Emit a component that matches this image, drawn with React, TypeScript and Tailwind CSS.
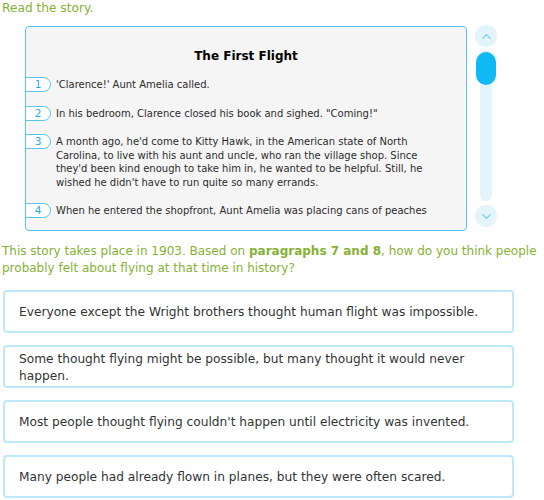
import { ChevronUp, ChevronDown } from "lucide-react";

const paragraphs = [
  "'Clarence!' Aunt Amelia called.",
  'In his bedroom, Clarence closed his book and sighed. "Coming!"',
  "A month ago, he'd come to Kitty Hawk, in the American state of North Carolina, to live with his aunt and uncle, who ran the village shop. Since they'd been kind enough to take him in, he wanted to be helpful. Still, he wished he didn't have to run quite so many errands.",
  "When he entered the shopfront, Aunt Amelia was placing cans of peaches",
];

const answers = [
  "Everyone except the Wright brothers thought human flight was impossible.",
  "Some thought flying might be possible, but many thought it would never happen.",
  "Most people thought flying couldn't happen until electricity was invented.",
  "Many people had already flown in planes, but they were often scared.",
];

function Scroller() {
  return (
    <div className="flex w-[22px] flex-col items-center">
      <div className="mt-[-1px] flex h-[22px] w-[22px] items-center justify-center rounded-full bg-[#e4f4fb]">
        <ChevronUp size={15} strokeWidth={1.75} className="text-[#6fc8ef]" />
      </div>
      <div className="relative mt-[3px] h-[151px] w-[12px] rounded-full bg-[#e4f4fb]">
        <div className="absolute left-[-4px] top-[2px] h-[33px] w-[20px] rounded-full bg-[#0fb9f3]" />
      </div>
      <div className="mt-[4px] flex h-[22px] w-[22px] items-center justify-center rounded-full bg-[#e4f4fb]">
        <ChevronDown size={15} strokeWidth={1.75} className="text-[#6fc8ef]" />
      </div>
    </div>
  );
}

export default function App() {
  return (
    <main className="h-[500px] w-[544px] overflow-hidden bg-white font-['DejaVu_Sans',Verdana,sans-serif]">
      <p className="pl-[2px] pt-[1px] text-[12.2px] leading-[15px] text-[#85b234]">Read the story.</p>

      <div className="mt-[10px] flex items-start">
        <div className="ml-[25px] h-[205px] w-[442px] overflow-hidden rounded-[4px] border border-[#52c5f0] bg-[#f5f5f5]">
          <h2 className="pt-[22px] text-center text-[12px] font-bold leading-[15px] text-black">The First Flight</h2>
          <div className="mt-[14px] flex flex-col gap-[14.5px] pr-[30px]">
            {paragraphs.map((p, i) => (
              <div key={i} className="flex items-start">
                <span className="-ml-px mt-[-1px] flex h-[15px] w-[26px] shrink-0 items-center justify-center rounded-r-full border border-[#52c5f0] bg-white text-[10.5px] leading-none text-[#2aa9e3]">
                  {i + 1}
                </span>
                <p className="ml-[5px] text-[10px] leading-[13.5px] text-[#2b2b2b]">{p}</p>
              </div>
            ))}
          </div>
        </div>
        <div className="ml-[8px]">
          <Scroller />
        </div>
      </div>

      <p className="mt-[12px] pl-[2px] text-[12px] leading-[17px] text-[#85b234]">
        This story takes place in 1903. Based on <b className="font-bold">paragraphs 7 and 8</b>, how do you think people probably felt about flying at that time in history?
      </p>

      <div className="ml-[3px] mt-[13px] flex w-[511px] flex-col gap-[12px]">
        {answers.map((a, i) => (
          <div
            key={i}
            className="flex min-h-[43px] items-center rounded-[4px] border-2 border-[#bde8fb] bg-white pb-[1px] pl-[14px] pr-[16px] pt-[3px] text-[12.2px] leading-[17px] text-[#333]"
          >
            {a}
          </div>
        ))}
      </div>
    </main>
  );
}
